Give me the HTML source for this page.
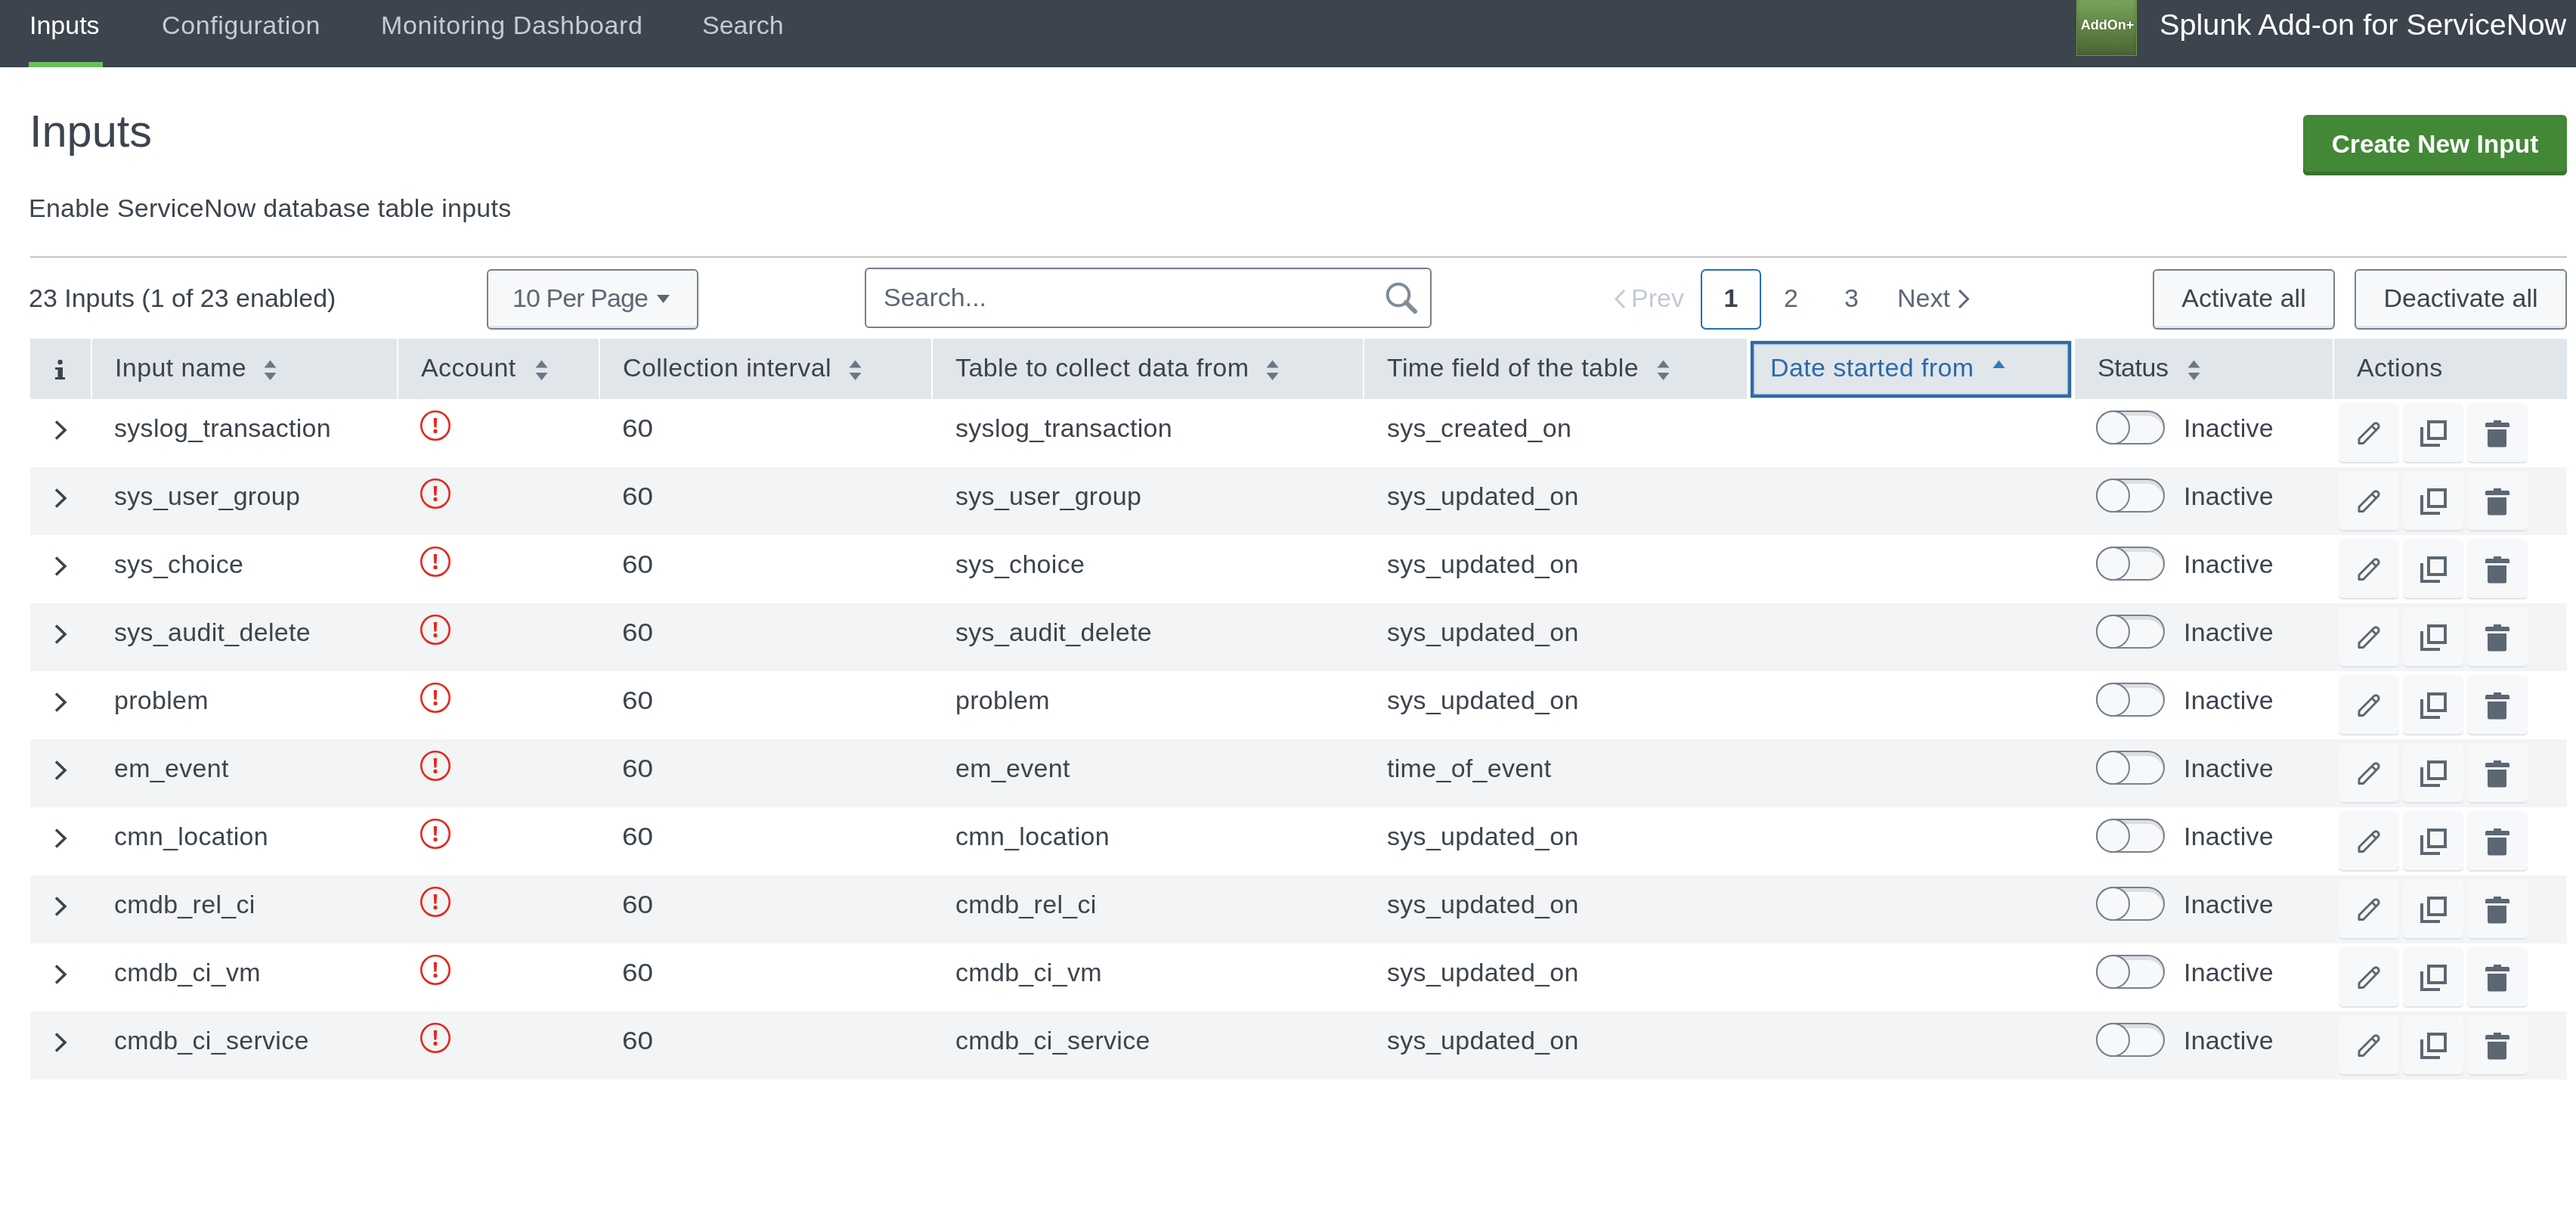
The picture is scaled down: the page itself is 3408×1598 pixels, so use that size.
<!DOCTYPE html><html><head><meta charset="utf-8"><style>
*{margin:0;padding:0;box-sizing:border-box}
html,body{width:3408px;height:1598px;overflow:hidden;background:#fff}
body{font-family:"Liberation Sans",sans-serif;color:#3c444d;position:relative;-webkit-font-smoothing:antialiased}
.a{will-change:transform}
.a{position:absolute;white-space:nowrap}
.t34{font-size:34px;line-height:34px}
.nav{left:0;top:0;width:3408px;height:89px;background:#3c444d}
.navi{top:16px;color:#c3cbd4}
.btn{background:#f7f8fa;border:2px solid #76818d;border-radius:6px;box-shadow:inset 0 -3px 0 #e1e6eb}
.hdr{top:448px;height:80px;background:#e1e6eb}
.row{left:40px;width:3356px;height:90px}
.alt{background:#f2f4f5}
.abtn{width:80px;height:80px;background:#f7f8fa;border-radius:6px;box-shadow:0 2px 0 #e1e4e8}
.tog{width:91px;height:45px;border:2px solid #76818d;border-radius:23px;background:#f7f8fa;box-shadow:inset 0 5px 0 #dcdee1}
.knob{left:-2px;top:-2px;width:45px;height:45px;border:2px solid #76818d;border-radius:50%;background:#f7f8fa}
</style></head><body>
<div class="a nav"></div>
<div class="a t34" style="left:38.5px;top:16px;color:#fff">Inputs</div>
<div class="a t34 navi" style="left:214px;letter-spacing:.6px">Configuration</div>
<div class="a t34 navi" style="left:504px;letter-spacing:.6px">Monitoring Dashboard</div>
<div class="a t34 navi" style="left:929px">Search</div>
<div class="a" style="left:38px;top:82px;width:98px;height:7px;background:#6cbf5c"></div>
<div class="a" style="left:2747px;top:-3px;width:80px;height:77px;background:linear-gradient(#7ba55a,#4b6535);border:1px solid #6e9c48;box-shadow:inset 0 0 4px rgba(0,0,0,.25)"></div>
<div class="a" style="left:2752px;top:24px;width:72px;font-size:18px;line-height:18px;font-weight:bold;color:#fff;text-align:center;text-shadow:0 0 2px #3d5a25">AddOn+</div>
<div class="a" style="left:2857px;top:11.8px;font-size:39.7px;line-height:40px;color:#fff">Splunk Add-on for ServiceNow</div>
<div class="a" style="left:38.7px;top:144px;font-size:59.5px;line-height:59.5px">Inputs</div>
<div class="a" style="left:3047px;top:152px;width:349px;height:80px;background:#438836;border-radius:6px;box-shadow:inset 0 -5px 0 #38722e"></div>
<div class="a" style="left:3047px;top:173.7px;width:349px;text-align:center;font-size:33.5px;line-height:33.5px;font-weight:bold;color:#fff">Create New Input</div>
<div class="a t34" style="left:38.2px;top:258px;letter-spacing:.23px">Enable ServiceNow database table inputs</div>
<div class="a" style="left:40px;top:339px;width:3356px;height:2px;background:#c4c4c4"></div>
<div class="a t34" style="left:38px;top:376.5px">23 Inputs (1 of 23 enabled)</div>
<div class="a btn" style="left:644px;top:356px;width:280px;height:80px"></div>
<div class="a t34" style="left:678px;top:377px;color:#5c6773;letter-spacing:-.9px">10 Per Page</div>
<svg class="a" style="left:869px;top:390px" width="17" height="11" viewBox="0 0 17 11"><path d="M0 0H17L8.5 11Z" fill="#5c6773"/></svg>
<div class="a" style="left:1144px;top:354px;width:750px;height:80px;border:2px solid #76818d;border-radius:6px;background:#fff;box-shadow:inset 0 2px 2px rgba(0,0,0,.06)"></div>
<div class="a t34" style="left:1169px;top:376px;color:#5c6773">Search...</div>
<svg class="a" style="left:1830px;top:370px" width="50" height="50" viewBox="0 0 50 50"><circle cx="20" cy="20" r="14.3" fill="none" stroke="#818b96" stroke-width="4"/><path d="M30 30L42 42" stroke="#818b96" stroke-width="6" stroke-linecap="round"/></svg>
<svg class="a" style="left:2134px;top:381px" width="20" height="30" viewBox="0 0 20 30"><path d="M15 3L4 14.5L15 26" fill="none" stroke="#c3cbd4" stroke-width="3"/></svg>
<div class="a t34" style="left:2158px;top:377px;color:#c3cbd4">Prev</div>
<div class="a" style="left:2250px;top:356px;width:80px;height:80px;border:2px solid #1f6fb9;border-radius:7px;background:#fff"></div>
<div class="a" style="left:2250px;top:377px;width:80px;text-align:center;font-size:34px;line-height:34px;font-weight:bold;color:#3c444d">1</div>
<div class="a t34" style="left:2359.5px;top:377px;color:#5c6773">2</div>
<div class="a t34" style="left:2439.5px;top:377px;color:#5c6773">3</div>
<div class="a t34" style="left:2510px;top:377px;color:#5c6773">Next</div>
<svg class="a" style="left:2587px;top:381px" width="22" height="30" viewBox="0 0 22 30"><path d="M5 3L16.5 14.5L5 26" fill="none" stroke="#5c6773" stroke-width="3"/></svg>
<div class="a btn" style="left:2848px;top:356px;width:241px;height:80px"></div>
<div class="a t34" style="left:2848px;top:377px;width:241px;text-align:center">Activate all</div>
<div class="a btn" style="left:3115px;top:356px;width:281px;height:80px"></div>
<div class="a t34" style="left:3115px;top:377px;width:281px;text-align:center">Deactivate all</div>
<div class="a" style="left:40px;top:448px;width:3356px;height:80px;background:#e1e6eb"></div>
<div class="a" style="left:120px;top:448px;width:2px;height:80px;background:#fff"></div>
<div class="a" style="left:525px;top:448px;width:2px;height:80px;background:#fff"></div>
<div class="a" style="left:792px;top:448px;width:2px;height:80px;background:#fff"></div>
<div class="a" style="left:1232px;top:448px;width:2px;height:80px;background:#fff"></div>
<div class="a" style="left:1803px;top:448px;width:2px;height:80px;background:#fff"></div>
<div class="a" style="left:2311px;top:448px;width:2px;height:80px;background:#fff"></div>
<div class="a" style="left:2743px;top:448px;width:2px;height:80px;background:#fff"></div>
<div class="a" style="left:3086px;top:448px;width:2px;height:80px;background:#fff"></div>
<div class="a" style="left:2313px;top:448px;width:430px;height:80px;background:#fff"></div>
<div class="a" style="left:2316px;top:450.5px;width:424px;height:74.5px;background:#e1e6eb;border:4px solid #2d6ba9;box-shadow:0 0 1.5px 0.5px rgba(45,107,169,.7),inset 0 0 1.5px 0.5px rgba(45,107,169,.7)"></div>
<svg class="a" style="left:70px;top:472px" width="20" height="34" viewBox="0 0 20 34"><circle cx="9.6" cy="7" r="3.2" fill="#3c444d"/><path d="M3 14H13V27H16V30H3V27H6.5V17H3Z" fill="#3c444d"/></svg>
<div class="a t34" style="left:152px;top:469px;letter-spacing:.4px">Input name</div>
<div class="a t34" style="left:557px;top:469px;letter-spacing:.4px">Account</div>
<div class="a t34" style="left:824px;top:469px;letter-spacing:.4px">Collection interval</div>
<div class="a t34" style="left:1264px;top:469px;letter-spacing:.4px">Table to collect data from</div>
<div class="a t34" style="left:1835px;top:469px;letter-spacing:.4px">Time field of the table</div>
<div class="a t34" style="left:2775px;top:469px;letter-spacing:-.5px">Status</div>
<svg class="a" style="left:349px;top:476px" width="17" height="28" viewBox="0 0 17 28"><path d="M8.5 0.5L16.5 10.5H0.5Z" fill="#6b7785"/><path d="M0.5 17H16.5L8.5 27Z" fill="#6b7785"/></svg>
<svg class="a" style="left:708px;top:476px" width="17" height="28" viewBox="0 0 17 28"><path d="M8.5 0.5L16.5 10.5H0.5Z" fill="#6b7785"/><path d="M0.5 17H16.5L8.5 27Z" fill="#6b7785"/></svg>
<svg class="a" style="left:1123px;top:476px" width="17" height="28" viewBox="0 0 17 28"><path d="M8.5 0.5L16.5 10.5H0.5Z" fill="#6b7785"/><path d="M0.5 17H16.5L8.5 27Z" fill="#6b7785"/></svg>
<svg class="a" style="left:1675px;top:476px" width="17" height="28" viewBox="0 0 17 28"><path d="M8.5 0.5L16.5 10.5H0.5Z" fill="#6b7785"/><path d="M0.5 17H16.5L8.5 27Z" fill="#6b7785"/></svg>
<svg class="a" style="left:2192px;top:476px" width="17" height="28" viewBox="0 0 17 28"><path d="M8.5 0.5L16.5 10.5H0.5Z" fill="#6b7785"/><path d="M0.5 17H16.5L8.5 27Z" fill="#6b7785"/></svg>
<svg class="a" style="left:2894px;top:476px" width="17" height="28" viewBox="0 0 17 28"><path d="M8.5 0.5L16.5 10.5H0.5Z" fill="#6b7785"/><path d="M0.5 17H16.5L8.5 27Z" fill="#6b7785"/></svg>
<div class="a t34" style="left:2342px;top:469px;color:#2b6aab;letter-spacing:.4px">Date started from</div>
<svg class="a" style="left:2636px;top:476px" width="17" height="12" viewBox="0 0 17 12"><path d="M8.5 0.5L16.5 11H0.5Z" fill="#3579be"/></svg>
<div class="a t34" style="left:3118px;top:469px;letter-spacing:.3px">Actions</div>
<div class="a row" style="top:528px"></div>
<svg class="a" style="left:70px;top:554px" width="22" height="30" viewBox="0 0 22 30"><path d="M4 3.5L16 15L4 26.5" fill="none" stroke="#3c444d" stroke-width="3.6"/></svg>
<div class="a t34" style="left:151px;top:549.2px;letter-spacing:.3px">syslog_transaction</div>
<svg class="a" style="left:554px;top:542px" width="44" height="44" viewBox="0 0 44 44"><circle cx="22" cy="21" r="18.7" fill="none" stroke="#e3281c" stroke-width="2.6"/><path d="M19.7 11H24.2L23.5 23.6H20.4Z" fill="#e3281c"/><circle cx="22" cy="28.4" r="2.6" fill="#e3281c"/></svg>
<div class="a t34" style="left:822.5px;top:549.2px;transform:scaleX(1.085);transform-origin:0 0">60</div>
<div class="a t34" style="left:1264px;top:549.2px;letter-spacing:.3px">syslog_transaction</div>
<div class="a t34" style="left:1835px;top:549.2px;letter-spacing:.3px">sys_created_on</div>
<div class="a tog" style="left:2773px;top:543px"><div class="a knob"></div></div>
<div class="a t34" style="left:2889px;top:549.2px;letter-spacing:.2px">Inactive</div>
<div class="a abtn" style="left:3094px;top:533px;height:78px"></div>
<div class="a abtn" style="left:3179px;top:533px;height:78px"></div>
<div class="a abtn" style="left:3264px;top:533px;height:78px"></div>
<svg class="a" style="left:3114px;top:553px" width="40" height="40" viewBox="0 0 40 40"><path d="M7 33.5V27.5L26.5 8A3.5 3.5 0 0 1 32 13.5L12.5 33.5Z M24 10.5L29.5 16" fill="none" stroke="#5c6773" stroke-width="3" stroke-linejoin="round"/></svg>
<svg class="a" style="left:3200px;top:556px" width="40" height="40" viewBox="0 0 40 40"><path d="M2 9V35H28V31H6V9Z" fill="#5c6773"/><path d="M11 0H37V26H11Z M15 4V22H33V4Z" fill="#5c6773" fill-rule="evenodd"/></svg>
<svg class="a" style="left:3284px;top:556px" width="40" height="40" viewBox="0 0 40 40"><path d="M15 0H25V3H34A2 2 0 0 1 36 5V9H4V5A2 2 0 0 1 6 3H15Z" fill="#5c6773"/><path d="M7 12H32V33A2.5 2.5 0 0 1 29.5 35.5H9.5A2.5 2.5 0 0 1 7 33Z" fill="#5c6773"/></svg>
<div class="a row alt" style="top:618px"></div>
<svg class="a" style="left:70px;top:644px" width="22" height="30" viewBox="0 0 22 30"><path d="M4 3.5L16 15L4 26.5" fill="none" stroke="#3c444d" stroke-width="3.6"/></svg>
<div class="a t34" style="left:151px;top:639.2px;letter-spacing:.3px">sys_user_group</div>
<svg class="a" style="left:554px;top:632px" width="44" height="44" viewBox="0 0 44 44"><circle cx="22" cy="21" r="18.7" fill="none" stroke="#e3281c" stroke-width="2.6"/><path d="M19.7 11H24.2L23.5 23.6H20.4Z" fill="#e3281c"/><circle cx="22" cy="28.4" r="2.6" fill="#e3281c"/></svg>
<div class="a t34" style="left:822.5px;top:639.2px;transform:scaleX(1.085);transform-origin:0 0">60</div>
<div class="a t34" style="left:1264px;top:639.2px;letter-spacing:.3px">sys_user_group</div>
<div class="a t34" style="left:1835px;top:639.2px;letter-spacing:.3px">sys_updated_on</div>
<div class="a tog" style="left:2773px;top:633px"><div class="a knob"></div></div>
<div class="a t34" style="left:2889px;top:639.2px;letter-spacing:.2px">Inactive</div>
<div class="a abtn" style="left:3094px;top:623px;height:78px"></div>
<div class="a abtn" style="left:3179px;top:623px;height:78px"></div>
<div class="a abtn" style="left:3264px;top:623px;height:78px"></div>
<svg class="a" style="left:3114px;top:643px" width="40" height="40" viewBox="0 0 40 40"><path d="M7 33.5V27.5L26.5 8A3.5 3.5 0 0 1 32 13.5L12.5 33.5Z M24 10.5L29.5 16" fill="none" stroke="#5c6773" stroke-width="3" stroke-linejoin="round"/></svg>
<svg class="a" style="left:3200px;top:646px" width="40" height="40" viewBox="0 0 40 40"><path d="M2 9V35H28V31H6V9Z" fill="#5c6773"/><path d="M11 0H37V26H11Z M15 4V22H33V4Z" fill="#5c6773" fill-rule="evenodd"/></svg>
<svg class="a" style="left:3284px;top:646px" width="40" height="40" viewBox="0 0 40 40"><path d="M15 0H25V3H34A2 2 0 0 1 36 5V9H4V5A2 2 0 0 1 6 3H15Z" fill="#5c6773"/><path d="M7 12H32V33A2.5 2.5 0 0 1 29.5 35.5H9.5A2.5 2.5 0 0 1 7 33Z" fill="#5c6773"/></svg>
<div class="a row" style="top:708px"></div>
<svg class="a" style="left:70px;top:734px" width="22" height="30" viewBox="0 0 22 30"><path d="M4 3.5L16 15L4 26.5" fill="none" stroke="#3c444d" stroke-width="3.6"/></svg>
<div class="a t34" style="left:151px;top:729.2px;letter-spacing:.3px">sys_choice</div>
<svg class="a" style="left:554px;top:722px" width="44" height="44" viewBox="0 0 44 44"><circle cx="22" cy="21" r="18.7" fill="none" stroke="#e3281c" stroke-width="2.6"/><path d="M19.7 11H24.2L23.5 23.6H20.4Z" fill="#e3281c"/><circle cx="22" cy="28.4" r="2.6" fill="#e3281c"/></svg>
<div class="a t34" style="left:822.5px;top:729.2px;transform:scaleX(1.085);transform-origin:0 0">60</div>
<div class="a t34" style="left:1264px;top:729.2px;letter-spacing:.3px">sys_choice</div>
<div class="a t34" style="left:1835px;top:729.2px;letter-spacing:.3px">sys_updated_on</div>
<div class="a tog" style="left:2773px;top:723px"><div class="a knob"></div></div>
<div class="a t34" style="left:2889px;top:729.2px;letter-spacing:.2px">Inactive</div>
<div class="a abtn" style="left:3094px;top:713px;height:78px"></div>
<div class="a abtn" style="left:3179px;top:713px;height:78px"></div>
<div class="a abtn" style="left:3264px;top:713px;height:78px"></div>
<svg class="a" style="left:3114px;top:733px" width="40" height="40" viewBox="0 0 40 40"><path d="M7 33.5V27.5L26.5 8A3.5 3.5 0 0 1 32 13.5L12.5 33.5Z M24 10.5L29.5 16" fill="none" stroke="#5c6773" stroke-width="3" stroke-linejoin="round"/></svg>
<svg class="a" style="left:3200px;top:736px" width="40" height="40" viewBox="0 0 40 40"><path d="M2 9V35H28V31H6V9Z" fill="#5c6773"/><path d="M11 0H37V26H11Z M15 4V22H33V4Z" fill="#5c6773" fill-rule="evenodd"/></svg>
<svg class="a" style="left:3284px;top:736px" width="40" height="40" viewBox="0 0 40 40"><path d="M15 0H25V3H34A2 2 0 0 1 36 5V9H4V5A2 2 0 0 1 6 3H15Z" fill="#5c6773"/><path d="M7 12H32V33A2.5 2.5 0 0 1 29.5 35.5H9.5A2.5 2.5 0 0 1 7 33Z" fill="#5c6773"/></svg>
<div class="a row alt" style="top:798px"></div>
<svg class="a" style="left:70px;top:824px" width="22" height="30" viewBox="0 0 22 30"><path d="M4 3.5L16 15L4 26.5" fill="none" stroke="#3c444d" stroke-width="3.6"/></svg>
<div class="a t34" style="left:151px;top:819.2px;letter-spacing:.3px">sys_audit_delete</div>
<svg class="a" style="left:554px;top:812px" width="44" height="44" viewBox="0 0 44 44"><circle cx="22" cy="21" r="18.7" fill="none" stroke="#e3281c" stroke-width="2.6"/><path d="M19.7 11H24.2L23.5 23.6H20.4Z" fill="#e3281c"/><circle cx="22" cy="28.4" r="2.6" fill="#e3281c"/></svg>
<div class="a t34" style="left:822.5px;top:819.2px;transform:scaleX(1.085);transform-origin:0 0">60</div>
<div class="a t34" style="left:1264px;top:819.2px;letter-spacing:.3px">sys_audit_delete</div>
<div class="a t34" style="left:1835px;top:819.2px;letter-spacing:.3px">sys_updated_on</div>
<div class="a tog" style="left:2773px;top:813px"><div class="a knob"></div></div>
<div class="a t34" style="left:2889px;top:819.2px;letter-spacing:.2px">Inactive</div>
<div class="a abtn" style="left:3094px;top:803px;height:78px"></div>
<div class="a abtn" style="left:3179px;top:803px;height:78px"></div>
<div class="a abtn" style="left:3264px;top:803px;height:78px"></div>
<svg class="a" style="left:3114px;top:823px" width="40" height="40" viewBox="0 0 40 40"><path d="M7 33.5V27.5L26.5 8A3.5 3.5 0 0 1 32 13.5L12.5 33.5Z M24 10.5L29.5 16" fill="none" stroke="#5c6773" stroke-width="3" stroke-linejoin="round"/></svg>
<svg class="a" style="left:3200px;top:826px" width="40" height="40" viewBox="0 0 40 40"><path d="M2 9V35H28V31H6V9Z" fill="#5c6773"/><path d="M11 0H37V26H11Z M15 4V22H33V4Z" fill="#5c6773" fill-rule="evenodd"/></svg>
<svg class="a" style="left:3284px;top:826px" width="40" height="40" viewBox="0 0 40 40"><path d="M15 0H25V3H34A2 2 0 0 1 36 5V9H4V5A2 2 0 0 1 6 3H15Z" fill="#5c6773"/><path d="M7 12H32V33A2.5 2.5 0 0 1 29.5 35.5H9.5A2.5 2.5 0 0 1 7 33Z" fill="#5c6773"/></svg>
<div class="a row" style="top:888px"></div>
<svg class="a" style="left:70px;top:914px" width="22" height="30" viewBox="0 0 22 30"><path d="M4 3.5L16 15L4 26.5" fill="none" stroke="#3c444d" stroke-width="3.6"/></svg>
<div class="a t34" style="left:151px;top:909.2px;letter-spacing:.3px">problem</div>
<svg class="a" style="left:554px;top:902px" width="44" height="44" viewBox="0 0 44 44"><circle cx="22" cy="21" r="18.7" fill="none" stroke="#e3281c" stroke-width="2.6"/><path d="M19.7 11H24.2L23.5 23.6H20.4Z" fill="#e3281c"/><circle cx="22" cy="28.4" r="2.6" fill="#e3281c"/></svg>
<div class="a t34" style="left:822.5px;top:909.2px;transform:scaleX(1.085);transform-origin:0 0">60</div>
<div class="a t34" style="left:1264px;top:909.2px;letter-spacing:.3px">problem</div>
<div class="a t34" style="left:1835px;top:909.2px;letter-spacing:.3px">sys_updated_on</div>
<div class="a tog" style="left:2773px;top:903px"><div class="a knob"></div></div>
<div class="a t34" style="left:2889px;top:909.2px;letter-spacing:.2px">Inactive</div>
<div class="a abtn" style="left:3094px;top:893px;height:78px"></div>
<div class="a abtn" style="left:3179px;top:893px;height:78px"></div>
<div class="a abtn" style="left:3264px;top:893px;height:78px"></div>
<svg class="a" style="left:3114px;top:913px" width="40" height="40" viewBox="0 0 40 40"><path d="M7 33.5V27.5L26.5 8A3.5 3.5 0 0 1 32 13.5L12.5 33.5Z M24 10.5L29.5 16" fill="none" stroke="#5c6773" stroke-width="3" stroke-linejoin="round"/></svg>
<svg class="a" style="left:3200px;top:916px" width="40" height="40" viewBox="0 0 40 40"><path d="M2 9V35H28V31H6V9Z" fill="#5c6773"/><path d="M11 0H37V26H11Z M15 4V22H33V4Z" fill="#5c6773" fill-rule="evenodd"/></svg>
<svg class="a" style="left:3284px;top:916px" width="40" height="40" viewBox="0 0 40 40"><path d="M15 0H25V3H34A2 2 0 0 1 36 5V9H4V5A2 2 0 0 1 6 3H15Z" fill="#5c6773"/><path d="M7 12H32V33A2.5 2.5 0 0 1 29.5 35.5H9.5A2.5 2.5 0 0 1 7 33Z" fill="#5c6773"/></svg>
<div class="a row alt" style="top:978px"></div>
<svg class="a" style="left:70px;top:1004px" width="22" height="30" viewBox="0 0 22 30"><path d="M4 3.5L16 15L4 26.5" fill="none" stroke="#3c444d" stroke-width="3.6"/></svg>
<div class="a t34" style="left:151px;top:999.2px;letter-spacing:.3px">em_event</div>
<svg class="a" style="left:554px;top:992px" width="44" height="44" viewBox="0 0 44 44"><circle cx="22" cy="21" r="18.7" fill="none" stroke="#e3281c" stroke-width="2.6"/><path d="M19.7 11H24.2L23.5 23.6H20.4Z" fill="#e3281c"/><circle cx="22" cy="28.4" r="2.6" fill="#e3281c"/></svg>
<div class="a t34" style="left:822.5px;top:999.2px;transform:scaleX(1.085);transform-origin:0 0">60</div>
<div class="a t34" style="left:1264px;top:999.2px;letter-spacing:.3px">em_event</div>
<div class="a t34" style="left:1835px;top:999.2px;letter-spacing:.3px">time_of_event</div>
<div class="a tog" style="left:2773px;top:993px"><div class="a knob"></div></div>
<div class="a t34" style="left:2889px;top:999.2px;letter-spacing:.2px">Inactive</div>
<div class="a abtn" style="left:3094px;top:983px;height:78px"></div>
<div class="a abtn" style="left:3179px;top:983px;height:78px"></div>
<div class="a abtn" style="left:3264px;top:983px;height:78px"></div>
<svg class="a" style="left:3114px;top:1003px" width="40" height="40" viewBox="0 0 40 40"><path d="M7 33.5V27.5L26.5 8A3.5 3.5 0 0 1 32 13.5L12.5 33.5Z M24 10.5L29.5 16" fill="none" stroke="#5c6773" stroke-width="3" stroke-linejoin="round"/></svg>
<svg class="a" style="left:3200px;top:1006px" width="40" height="40" viewBox="0 0 40 40"><path d="M2 9V35H28V31H6V9Z" fill="#5c6773"/><path d="M11 0H37V26H11Z M15 4V22H33V4Z" fill="#5c6773" fill-rule="evenodd"/></svg>
<svg class="a" style="left:3284px;top:1006px" width="40" height="40" viewBox="0 0 40 40"><path d="M15 0H25V3H34A2 2 0 0 1 36 5V9H4V5A2 2 0 0 1 6 3H15Z" fill="#5c6773"/><path d="M7 12H32V33A2.5 2.5 0 0 1 29.5 35.5H9.5A2.5 2.5 0 0 1 7 33Z" fill="#5c6773"/></svg>
<div class="a row" style="top:1068px"></div>
<svg class="a" style="left:70px;top:1094px" width="22" height="30" viewBox="0 0 22 30"><path d="M4 3.5L16 15L4 26.5" fill="none" stroke="#3c444d" stroke-width="3.6"/></svg>
<div class="a t34" style="left:151px;top:1089.2px;letter-spacing:.3px">cmn_location</div>
<svg class="a" style="left:554px;top:1082px" width="44" height="44" viewBox="0 0 44 44"><circle cx="22" cy="21" r="18.7" fill="none" stroke="#e3281c" stroke-width="2.6"/><path d="M19.7 11H24.2L23.5 23.6H20.4Z" fill="#e3281c"/><circle cx="22" cy="28.4" r="2.6" fill="#e3281c"/></svg>
<div class="a t34" style="left:822.5px;top:1089.2px;transform:scaleX(1.085);transform-origin:0 0">60</div>
<div class="a t34" style="left:1264px;top:1089.2px;letter-spacing:.3px">cmn_location</div>
<div class="a t34" style="left:1835px;top:1089.2px;letter-spacing:.3px">sys_updated_on</div>
<div class="a tog" style="left:2773px;top:1083px"><div class="a knob"></div></div>
<div class="a t34" style="left:2889px;top:1089.2px;letter-spacing:.2px">Inactive</div>
<div class="a abtn" style="left:3094px;top:1073px;height:78px"></div>
<div class="a abtn" style="left:3179px;top:1073px;height:78px"></div>
<div class="a abtn" style="left:3264px;top:1073px;height:78px"></div>
<svg class="a" style="left:3114px;top:1093px" width="40" height="40" viewBox="0 0 40 40"><path d="M7 33.5V27.5L26.5 8A3.5 3.5 0 0 1 32 13.5L12.5 33.5Z M24 10.5L29.5 16" fill="none" stroke="#5c6773" stroke-width="3" stroke-linejoin="round"/></svg>
<svg class="a" style="left:3200px;top:1096px" width="40" height="40" viewBox="0 0 40 40"><path d="M2 9V35H28V31H6V9Z" fill="#5c6773"/><path d="M11 0H37V26H11Z M15 4V22H33V4Z" fill="#5c6773" fill-rule="evenodd"/></svg>
<svg class="a" style="left:3284px;top:1096px" width="40" height="40" viewBox="0 0 40 40"><path d="M15 0H25V3H34A2 2 0 0 1 36 5V9H4V5A2 2 0 0 1 6 3H15Z" fill="#5c6773"/><path d="M7 12H32V33A2.5 2.5 0 0 1 29.5 35.5H9.5A2.5 2.5 0 0 1 7 33Z" fill="#5c6773"/></svg>
<div class="a row alt" style="top:1158px"></div>
<svg class="a" style="left:70px;top:1184px" width="22" height="30" viewBox="0 0 22 30"><path d="M4 3.5L16 15L4 26.5" fill="none" stroke="#3c444d" stroke-width="3.6"/></svg>
<div class="a t34" style="left:151px;top:1179.2px;letter-spacing:.3px">cmdb_rel_ci</div>
<svg class="a" style="left:554px;top:1172px" width="44" height="44" viewBox="0 0 44 44"><circle cx="22" cy="21" r="18.7" fill="none" stroke="#e3281c" stroke-width="2.6"/><path d="M19.7 11H24.2L23.5 23.6H20.4Z" fill="#e3281c"/><circle cx="22" cy="28.4" r="2.6" fill="#e3281c"/></svg>
<div class="a t34" style="left:822.5px;top:1179.2px;transform:scaleX(1.085);transform-origin:0 0">60</div>
<div class="a t34" style="left:1264px;top:1179.2px;letter-spacing:.3px">cmdb_rel_ci</div>
<div class="a t34" style="left:1835px;top:1179.2px;letter-spacing:.3px">sys_updated_on</div>
<div class="a tog" style="left:2773px;top:1173px"><div class="a knob"></div></div>
<div class="a t34" style="left:2889px;top:1179.2px;letter-spacing:.2px">Inactive</div>
<div class="a abtn" style="left:3094px;top:1163px;height:78px"></div>
<div class="a abtn" style="left:3179px;top:1163px;height:78px"></div>
<div class="a abtn" style="left:3264px;top:1163px;height:78px"></div>
<svg class="a" style="left:3114px;top:1183px" width="40" height="40" viewBox="0 0 40 40"><path d="M7 33.5V27.5L26.5 8A3.5 3.5 0 0 1 32 13.5L12.5 33.5Z M24 10.5L29.5 16" fill="none" stroke="#5c6773" stroke-width="3" stroke-linejoin="round"/></svg>
<svg class="a" style="left:3200px;top:1186px" width="40" height="40" viewBox="0 0 40 40"><path d="M2 9V35H28V31H6V9Z" fill="#5c6773"/><path d="M11 0H37V26H11Z M15 4V22H33V4Z" fill="#5c6773" fill-rule="evenodd"/></svg>
<svg class="a" style="left:3284px;top:1186px" width="40" height="40" viewBox="0 0 40 40"><path d="M15 0H25V3H34A2 2 0 0 1 36 5V9H4V5A2 2 0 0 1 6 3H15Z" fill="#5c6773"/><path d="M7 12H32V33A2.5 2.5 0 0 1 29.5 35.5H9.5A2.5 2.5 0 0 1 7 33Z" fill="#5c6773"/></svg>
<div class="a row" style="top:1248px"></div>
<svg class="a" style="left:70px;top:1274px" width="22" height="30" viewBox="0 0 22 30"><path d="M4 3.5L16 15L4 26.5" fill="none" stroke="#3c444d" stroke-width="3.6"/></svg>
<div class="a t34" style="left:151px;top:1269.2px;letter-spacing:.3px">cmdb_ci_vm</div>
<svg class="a" style="left:554px;top:1262px" width="44" height="44" viewBox="0 0 44 44"><circle cx="22" cy="21" r="18.7" fill="none" stroke="#e3281c" stroke-width="2.6"/><path d="M19.7 11H24.2L23.5 23.6H20.4Z" fill="#e3281c"/><circle cx="22" cy="28.4" r="2.6" fill="#e3281c"/></svg>
<div class="a t34" style="left:822.5px;top:1269.2px;transform:scaleX(1.085);transform-origin:0 0">60</div>
<div class="a t34" style="left:1264px;top:1269.2px;letter-spacing:.3px">cmdb_ci_vm</div>
<div class="a t34" style="left:1835px;top:1269.2px;letter-spacing:.3px">sys_updated_on</div>
<div class="a tog" style="left:2773px;top:1263px"><div class="a knob"></div></div>
<div class="a t34" style="left:2889px;top:1269.2px;letter-spacing:.2px">Inactive</div>
<div class="a abtn" style="left:3094px;top:1253px;height:78px"></div>
<div class="a abtn" style="left:3179px;top:1253px;height:78px"></div>
<div class="a abtn" style="left:3264px;top:1253px;height:78px"></div>
<svg class="a" style="left:3114px;top:1273px" width="40" height="40" viewBox="0 0 40 40"><path d="M7 33.5V27.5L26.5 8A3.5 3.5 0 0 1 32 13.5L12.5 33.5Z M24 10.5L29.5 16" fill="none" stroke="#5c6773" stroke-width="3" stroke-linejoin="round"/></svg>
<svg class="a" style="left:3200px;top:1276px" width="40" height="40" viewBox="0 0 40 40"><path d="M2 9V35H28V31H6V9Z" fill="#5c6773"/><path d="M11 0H37V26H11Z M15 4V22H33V4Z" fill="#5c6773" fill-rule="evenodd"/></svg>
<svg class="a" style="left:3284px;top:1276px" width="40" height="40" viewBox="0 0 40 40"><path d="M15 0H25V3H34A2 2 0 0 1 36 5V9H4V5A2 2 0 0 1 6 3H15Z" fill="#5c6773"/><path d="M7 12H32V33A2.5 2.5 0 0 1 29.5 35.5H9.5A2.5 2.5 0 0 1 7 33Z" fill="#5c6773"/></svg>
<div class="a row alt" style="top:1338px"></div>
<svg class="a" style="left:70px;top:1364px" width="22" height="30" viewBox="0 0 22 30"><path d="M4 3.5L16 15L4 26.5" fill="none" stroke="#3c444d" stroke-width="3.6"/></svg>
<div class="a t34" style="left:151px;top:1359.2px;letter-spacing:.3px">cmdb_ci_service</div>
<svg class="a" style="left:554px;top:1352px" width="44" height="44" viewBox="0 0 44 44"><circle cx="22" cy="21" r="18.7" fill="none" stroke="#e3281c" stroke-width="2.6"/><path d="M19.7 11H24.2L23.5 23.6H20.4Z" fill="#e3281c"/><circle cx="22" cy="28.4" r="2.6" fill="#e3281c"/></svg>
<div class="a t34" style="left:822.5px;top:1359.2px;transform:scaleX(1.085);transform-origin:0 0">60</div>
<div class="a t34" style="left:1264px;top:1359.2px;letter-spacing:.3px">cmdb_ci_service</div>
<div class="a t34" style="left:1835px;top:1359.2px;letter-spacing:.3px">sys_updated_on</div>
<div class="a tog" style="left:2773px;top:1353px"><div class="a knob"></div></div>
<div class="a t34" style="left:2889px;top:1359.2px;letter-spacing:.2px">Inactive</div>
<div class="a abtn" style="left:3094px;top:1343px;height:78px"></div>
<div class="a abtn" style="left:3179px;top:1343px;height:78px"></div>
<div class="a abtn" style="left:3264px;top:1343px;height:78px"></div>
<svg class="a" style="left:3114px;top:1363px" width="40" height="40" viewBox="0 0 40 40"><path d="M7 33.5V27.5L26.5 8A3.5 3.5 0 0 1 32 13.5L12.5 33.5Z M24 10.5L29.5 16" fill="none" stroke="#5c6773" stroke-width="3" stroke-linejoin="round"/></svg>
<svg class="a" style="left:3200px;top:1366px" width="40" height="40" viewBox="0 0 40 40"><path d="M2 9V35H28V31H6V9Z" fill="#5c6773"/><path d="M11 0H37V26H11Z M15 4V22H33V4Z" fill="#5c6773" fill-rule="evenodd"/></svg>
<svg class="a" style="left:3284px;top:1366px" width="40" height="40" viewBox="0 0 40 40"><path d="M15 0H25V3H34A2 2 0 0 1 36 5V9H4V5A2 2 0 0 1 6 3H15Z" fill="#5c6773"/><path d="M7 12H32V33A2.5 2.5 0 0 1 29.5 35.5H9.5A2.5 2.5 0 0 1 7 33Z" fill="#5c6773"/></svg>
</body></html>
